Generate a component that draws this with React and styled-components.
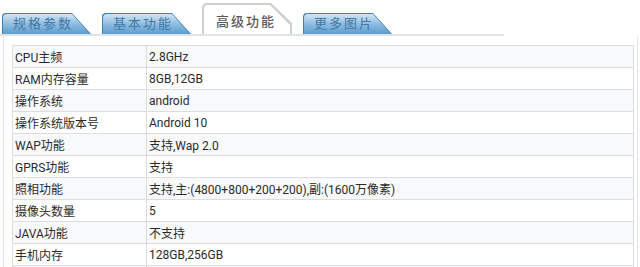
import React from "react";
import styled, { createGlobalStyle } from "styled-components";

const GlobalStyle = createGlobalStyle`
  html, body {
    margin: 0;
    padding: 0;
    background: #ffffff;
  }
  body {
    font-family: Roboto, "Noto Sans CJK SC", "Liberation Sans", sans-serif;
  }
`;

const tabs = ["规格参数", "基本功能", "高级功能", "更多图片"];

const specs = [
  ["CPU主频", "2.8GHz"],
  ["RAM内存容量", "8GB,12GB"],
  ["操作系统", "android"],
  ["操作系统版本号", "Android 10"],
  ["WAP功能", "支持,Wap 2.0"],
  ["GPRS功能", "支持"],
  ["照相功能", "支持,主:(4800+800+200+200),副:(1600万像素)"],
  ["摄像头数量", "5"],
  ["JAVA功能", "不支持"],
  ["手机内存", "128GB,256GB"],
  ["", ""],
];

function App() {
  const active = 2;
  return (
    <Page>
      <GlobalStyle />
      <TabBar>
        {tabs.map((t, i) =>
          i === active ? (
            <ActiveTab key={t}>
              <ActiveInner>{t}</ActiveInner>
            </ActiveTab>
          ) : (
            <Tab key={t}>
              <TabInner>{t}</TabInner>
            </Tab>
          )
        )}
      </TabBar>
      <Panel>
        <SpecTable>
          <tbody>
            {specs.map(([k, v], i) => (
              <Row key={i} shaded={i % 2 === 0}>
                <Label>{k}</Label>
                <Value>{v}</Value>
              </Row>
            ))}
          </tbody>
        </SpecTable>
      </Panel>
    </Page>
  );
}

export default App;

const Page = styled.div`
  width: 640px;
  height: 267px;
  overflow: hidden;
  padding-top: 3px;
  box-sizing: border-box;
`;

const TabBar = styled.div`
  display: flex;
  align-items: flex-end;
  gap: 11px;
  width: 502px;
  height: 31px;
  padding-left: 2px;
  border-bottom: 2px solid #e2e2e2;
`;

const Tab = styled.div`
  width: 89px;
  height: 21px;
  background: #3f7fb2;
  border-top-left-radius: 4px;
  clip-path: polygon(0 0, 70px 0, 100% 100%, 0 100%);
  padding: 1px 0 0 1px;
  box-sizing: border-box;
`;

const TabInner = styled.div`
  height: 100%;
  padding-left: 10px;
  background: linear-gradient(#d3e5f3, #8fbde0 50%, #5b9dcf);
  border-top-left-radius: 4px;
  clip-path: polygon(0 0, 69px 0, calc(100% - 1px) 100%, 0 100%);
  font-size: 13px;
  line-height: 20px;
  letter-spacing: 2px;
  color: #4477a6;
`;

const ActiveTab = styled.div`
  width: 90px;
  height: 31px;
  background: #cfcfcf;
  border-top-left-radius: 5px;
  clip-path: polygon(0 0, 69px 0, 100% 20px, 100% 100%, 0 100%);
  padding: 2px 2px 0 2px;
  box-sizing: border-box;
`;

const ActiveInner = styled.div`
  height: 100%;
  background: #ffffff;
  border-top-left-radius: 4px;
  clip-path: polygon(0 0, 66px 0, 100% 20px, 100% 100%, 0 100%);
  padding: 6px 0 0 12px;
  box-sizing: border-box;
  font-size: 13px;
  letter-spacing: 2px;
  color: #5a5a5a;
  font-weight: 500;
`;

const Panel = styled.div`
  margin: 0 2px 0 3px;
  padding: 9px 4px 0 8px;
  border-left: 1px solid #e4e4e4;
  border-right: 1px solid #e4e4e4;
`;

const SpecTable = styled.table`
  width: 622px;
  border-collapse: collapse;
  table-layout: fixed;
  border: 1px solid #d9d9d9;
`;

const Row = styled.tr`
  height: 22px;
  background: ${(p) => (p.shaded ? "#f8f9fb" : "#ffffff")};
`;

const Cell = styled.td`
  border: 1px solid #dddddd;
  padding: 0 0 0 2px;
  font-size: 12px;
  color: #2a2a2a;
  white-space: nowrap;
  vertical-align: middle;
`;

const Label = styled(Cell)`
  width: 131px;
`;

const Value = styled(Cell)``;
